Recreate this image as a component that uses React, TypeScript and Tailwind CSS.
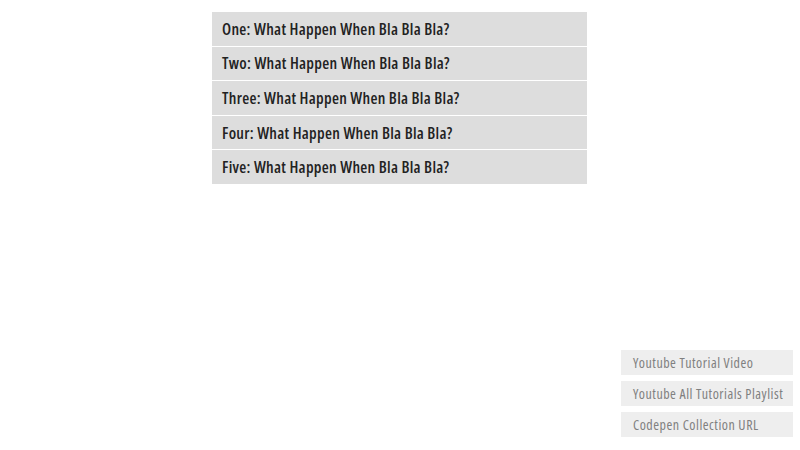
const questions = [
  "One: What Happen When Bla Bla Bla?",
  "Two: What Happen When Bla Bla Bla?",
  "Three: What Happen When Bla Bla Bla?",
  "Four: What Happen When Bla Bla Bla?",
  "Five: What Happen When Bla Bla Bla?",
];

const links = ["Youtube Tutorial Video", "Youtube All Tutorials Playlist", "Codepen Collection URL"];

export default function App() {
  return (
    <div className="relative h-[450px] w-[800px] bg-white font-['Open_Sans',sans-serif]">
      <ul className="ml-[212px] w-[375px] pt-3 flex flex-col gap-px">
        {questions.map((q) => (
          <li
            key={q}
            className="h-[33.6px] bg-[#dddddd] pl-[10px] flex items-center text-[16px] font-semibold font-stretch-semi-condensed tracking-[0.3px] text-[#222]"
          >
            {q}
          </li>
        ))}
      </ul>
      <div className="absolute right-[7px] bottom-[13px] flex flex-col gap-[6px]">
        {links.map((l) => (
          <a
            key={l}
            href="#"
            className="h-[25px] w-[172px] bg-[#eeeeee] pl-3 flex items-center whitespace-nowrap text-[14px] font-normal font-stretch-semi-condensed tracking-[0.5px] text-[#808080]"
          >
            {l}
          </a>
        ))}
      </div>
    </div>
  );
}
